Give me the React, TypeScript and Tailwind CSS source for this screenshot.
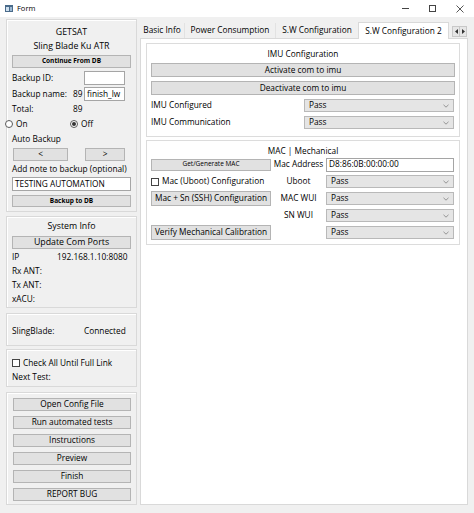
import React from 'react';
import clsx from 'clsx';

const Btn: React.FC<{ className?: string; children?: React.ReactNode }> = ({ className, children }) => (
  <button
    type="button"
    className={clsx(
      'flex items-center justify-center bg-[#e1e1e1] border border-[#b4b4b4] leading-none whitespace-nowrap',
      className
    )}
  >
    {children}
  </button>
);

const Combo: React.FC<{ className?: string }> = ({ className }) => (
  <div
    className={clsx(
      'flex items-center justify-between h-[13px] bg-[#e5e5e5] border border-[#b9b9b9] pl-[4px] pr-[4px] leading-none',
      className
    )}
  >
    <span>Pass</span>
    <svg width="6" height="4" viewBox="0 0 6 4">
      <path d="M0.5 0.8L3 3.2L5.5 0.8" stroke="#8a8a8a" strokeWidth="0.9" fill="none" />
    </svg>
  </div>
);

const Box: React.FC<{ className?: string; children?: React.ReactNode }> = ({ className, children }) => (
  <div className={clsx('border border-[#d9d9d9] shadow-[inset_1px_1px_0_#ffffff]', className)}>{children}</div>
);

const Radio: React.FC<{ checked?: boolean }> = ({ checked }) => (
  <span className="w-[8px] h-[8px] rounded-full border border-[#5a5a5a] bg-white flex items-center justify-center">
    {checked && <span className="w-[4px] h-[4px] rounded-full bg-[#333]" />}
  </span>
);

const Check = () => <span className="w-[8px] h-[8px] border border-[#444] bg-white" />;

const TitleBar = () => (
  <div className="h-[17px] bg-white flex items-center relative">
    <svg className="ml-[5px]" width="8" height="7" viewBox="0 0 8 7">
      <rect x="0" y="0" width="8" height="7" fill="#4a6b8a" />
      <rect x="1" y="2" width="3" height="4" fill="#cfe0ef" />
      <rect x="5" y="2" width="2" height="4" fill="#9bb8d3" />
    </svg>
    <span className="ml-[4px] text-[7.5px] leading-none">Form</span>
    <div className="ml-auto flex items-center h-full text-[#333]">
      <div className="w-[27px] flex justify-center">
        <span className="w-[7px] h-px bg-[#444]" />
      </div>
      <div className="w-[27px] flex justify-center">
        <span className="w-[7px] h-[7px] border border-[#444]" />
      </div>
      <div className="w-[27px] flex justify-center mr-[1px]">
        <svg width="8" height="8" viewBox="0 0 8 8">
          <path d="M0.5 0.5L7.5 7.5M7.5 0.5L0.5 7.5" stroke="#444" strokeWidth="0.9" />
        </svg>
      </div>
    </div>
  </div>
);

const LeftPanel = () => (
  <div className="w-[140px] pl-[6px] pr-[3px] pt-[2px] flex flex-col">
    <Box className="h-[193px] px-[5px] pt-[6px] flex flex-col">
      <div className="h-[14px] flex items-center justify-center text-[8.8px]">GETSAT</div>
      <div className="h-[14px] flex items-center justify-center text-[8.8px]">Sling Blade Ku ATR</div>
      <Btn className="mt-[1px] h-[13px] font-bold text-[6.5px]">Continue From DB</Btn>
      <div className="mt-[2px] h-[16px] flex items-center">
        <span className="w-[72px]">Backup ID:</span>
        <div className="w-[41px] h-[14px] bg-white border border-[#a5a5a5]" />
      </div>
      <div className="h-[16px] flex items-center">
        <span className="w-[61px]">Backup name:</span>
        <span className="w-[11px]">89</span>
        <div className="w-[41px] h-[14px] bg-white border border-[#a5a5a5] flex items-center pl-[2px] leading-none overflow-hidden whitespace-nowrap">
          finish_lw
        </div>
      </div>
      <div className="h-[14px] flex items-center">
        <span className="w-[61px]">Total:</span>
        <span>89</span>
      </div>
      <div className="h-[16px] flex items-center -ml-[7px]">
        <div className="w-[65px] flex items-center gap-[3px]">
          <Radio />
          <span>On</span>
        </div>
        <div className="flex items-center gap-[3px]">
          <Radio checked />
          <span>Off</span>
        </div>
      </div>
      <div className="h-[15px] flex items-center">Auto Backup</div>
      <div className="mt-[1px] h-[13px] flex">
        <Btn className="ml-[1px] w-[55px] h-[13px]">&lt;</Btn>
        <Btn className="ml-[17px] w-[40px] h-[13px]">&gt;</Btn>
      </div>
      <div className="h-[16px] flex items-center">Add note to backup (optional)</div>
      <div className="h-[14px] bg-white border border-[#a5a5a5] flex items-center pl-[2px] leading-none">
        TESTING AUTOMATION
      </div>
      <Btn className="mt-[4px] h-[12px] font-bold text-[6.5px]">Backup to DB</Btn>
    </Box>

    <Box className="mt-[4px] h-[92px] px-[5px] pt-[4px] flex flex-col">
      <div className="h-[12px] flex items-center justify-center text-[8.8px]">System Info</div>
      <Btn className="mt-[3px] h-[13px] text-[8.8px]">Update Com Ports</Btn>
      <div className="mt-[1px] h-[14px] flex items-center">
        <span className="w-[45px]">IP</span>
        <span>192.168.1.10:8080</span>
      </div>
      <div className="h-[14.5px] flex items-center">Rx ANT:</div>
      <div className="h-[14px] flex items-center">Tx ANT:</div>
      <div className="h-[14px] flex items-center">xACU:</div>
    </Box>

    <Box className="mt-[5px] h-[33px] px-[5px] pt-[3px] flex items-center">
      <span className="w-[72px]">SlingBlade:</span>
      <span>Connected</span>
    </Box>

    <Box className="mt-[3px] h-[38px] px-[5px] pt-[6px] flex flex-col">
      <div className="h-[14px] flex items-center gap-[3px]">
        <Check />
        <span>Check All Until Full Link</span>
      </div>
      <div className="h-[14px] flex items-center">Next Test:</div>
    </Box>

    <Box className="mt-[5px] h-[113px] px-[5px] pt-[5px] flex flex-col gap-[5px]">
      {['Open Config File', 'Run automated tests', 'Instructions', 'Preview', 'Finish', 'REPORT BUG'].map((t) => (
        <Btn key={t} className="h-[13px] ml-[1px]">
          {t}
        </Btn>
      ))}
    </Box>
  </div>
);

const Tabs = () => (
  <div className="h-[21px] flex items-end">
    <div className="w-[45px] h-[15px] flex items-center justify-center border-r border-[#e2e2e2] leading-none">Basic Info</div>
    <div className="w-[91px] h-[15px] flex items-center justify-center border-r border-[#e2e2e2] leading-none">
      Power Consumption
    </div>
    <div className="w-[82px] h-[15px] flex items-center justify-center leading-none">S.W Configuration</div>
    <div className="w-[91px] h-[17px] -mb-px z-10 bg-white border border-b-0 border-[#d9d9d9] flex items-center justify-center leading-none">
      S.W Configuration 2
    </div>
    <div className="ml-[3px] mb-[1px] w-[15px] h-[11px] flex self-end border border-[#c8c8c8] bg-[#e6e6e6]">
      <div className="flex-1 flex items-center justify-center">
        <svg width="3" height="5" viewBox="0 0 3 5">
          <path d="M3 0L0 2.5L3 5Z" fill="#333" />
        </svg>
      </div>
      <div className="flex-1 flex items-center justify-center border-l border-[#c8c8c8]">
        <svg width="3" height="5" viewBox="0 0 3 5">
          <path d="M0 0L3 2.5L0 5Z" fill="#333" />
        </svg>
      </div>
    </div>
  </div>
);

const RightPanel = () => (
  <div className="w-[328px] flex flex-col">
    <Tabs />
    <div className="h-[467px] bg-white border border-[#d9d9d9] pl-[5px] pt-[4px] flex flex-col">
      <div className="w-[314px] h-[94px] border border-[#dcdcdc] px-[4px] pt-[3px] flex flex-col">
        <div className="h-[14px] flex items-center justify-center">IMU Configuration</div>
        <Btn className="mt-[2px] h-[14px]">Activate com to imu</Btn>
        <Btn className="mt-[4px] h-[14px]">Deactivate com to imu</Btn>
        <div className="mt-[3px] h-[15px] flex items-center">
          <span className="w-[153px]">IMU Configured</span>
          <Combo className="w-[150px]" />
        </div>
        <div className="mt-[2px] h-[15px] flex items-center">
          <span className="w-[153px]">IMU Communication</span>
          <Combo className="w-[150px]" />
        </div>
      </div>

      <div className="mt-[3px] w-[314px] h-[105px] border border-[#dcdcdc] px-[4px] pt-[5px] flex flex-col">
        <div className="h-[11px] flex items-center justify-center">MAC | Mechanical</div>
        <div className="-mt-[1px] grid grid-cols-[120px_55px_128px] auto-rows-[17px] items-center">
          <Btn className="h-[12px] text-[6.5px]">Get/Generate MAC</Btn>
          <span className="text-center">Mac Address</span>
          <div className="h-[14px] bg-white border border-[#a5a5a5] flex items-center pl-[2px] leading-none">
            D8:86:0B:00:00:00
          </div>

          <div className="flex items-center gap-[3px]">
            <Check />
            <span>Mac (Uboot) Configuration</span>
          </div>
          <span className="text-center">Uboot</span>
          <Combo />

          <Btn className="h-[15px]">Mac + Sn (SSH) Configuration</Btn>
          <span className="text-center">MAC WUI</span>
          <Combo />

          <span />
          <span className="text-center">SN WUI</span>
          <Combo />

          <Btn className="h-[15px]">Verify Mechanical Calibration</Btn>
          <span />
          <Combo />
        </div>
      </div>
    </div>
  </div>
);

export default function App() {
  return (
    <div className="w-[474px] h-[513px] bg-[#f0f0f0] flex flex-col overflow-hidden font-['Open_Sans',sans-serif] text-[8.3px] text-black">
      <TitleBar />
      <div className="flex">
        <LeftPanel />
        <RightPanel />
      </div>
    </div>
  );
}
